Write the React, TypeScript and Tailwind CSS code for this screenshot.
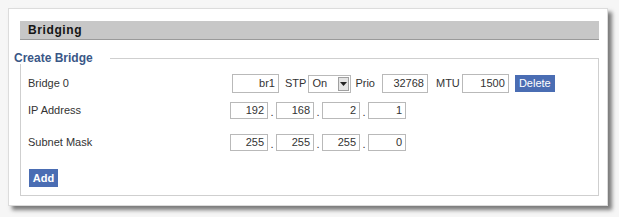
import React from "react";

const font = { fontFamily: '"Liberation Sans", Arial, sans-serif' };

function Field({ value, w, h = "h-[17px]" }: { value: string; w: string; h?: string }) {
  return (
    <div
      className={`${w} ${h} border border-[#b9b9b9] bg-white flex items-center justify-end pr-[3px] text-[11px] text-[#333] leading-none`}
    >
      {value}
    </div>
  );
}

function Ip({ parts }: { parts: string[] }) {
  return (
    <div className="flex items-center">
      {parts.map((p, i) => (
        <React.Fragment key={i}>
          {i > 0 && <span className="w-[8px] text-center text-[11px] text-[#333] self-end leading-[14px]">.</span>}
          <Field value={p} w="w-[38px]" h="h-[17px]" />
        </React.Fragment>
      ))}
    </div>
  );
}

export default function App() {
  return (
    <div className="w-[619px] h-[217px] bg-[#f6f6f6] pt-[8px] pl-[8px]" style={font}>
      <div className="w-[600px] h-[198px] bg-white border border-[#dcdcdc] shadow-[4px_4px_4px_rgba(0,0,0,0.5)] pt-[12px] pl-[11px]">
        <div className="w-[579px] h-[19px] bg-[#c7c7c7] border-b border-[#9a9a9a] flex items-center pl-[8px]">
          <span className="text-[12px] font-bold tracking-[0.6px] text-[#151515]">Bridging</span>
        </div>

        <div className="w-[579px] mt-[12px]">
          <div className="flex h-[12px]">
            <span className="-ml-[6px] bg-white text-[12px] leading-[12px] font-bold text-[#3a5787] pr-[17px]">
              Create Bridge
            </span>
            <div className="flex-1 self-end h-[6px] border-t border-r border-[#cfcfcf]" />
          </div>

          <div className="border-l border-r border-b border-[#cfcfcf] h-[132px] pl-[7px] pt-[10px] text-[11px] text-[#333]">
            <div className="flex items-center h-[19px]">
              <div className="w-[204px]">Bridge 0</div>
              <Field value="br1" w="w-[47px]" h="h-[19px]" />
              <span className="ml-[6px]">STP</span>
              <div className="ml-[2px] w-[43px] h-[18px] border border-[#b9b9b9] bg-white flex items-center">
                <span className="flex-1 pl-[3px]">On</span>
                <div className="w-[11px] h-[14px] mr-[1px] bg-[#e4e4e4] border border-[#a0a0a0] flex items-center justify-center">
                  <svg width="7" height="4" viewBox="0 0 7 4">
                    <path d="M0 0h7L3.5 4z" fill="#222" />
                  </svg>
                </div>
              </div>
              <span className="ml-[4px]">Prio</span>
              <div className="ml-[7px]">
                <Field value="32768" w="w-[46px]" h="h-[19px]" />
              </div>
              <span className="ml-[8px]">MTU</span>
              <div className="ml-[2px]">
                <Field value="1500" w="w-[47px]" h="h-[19px]" />
              </div>
              <button className="ml-[6px] h-[17px] w-[40px] bg-[#4a6db3] text-white text-[11px] leading-none">
                Delete
              </button>
            </div>

            <div className="flex items-center h-[17px] mt-[9px]">
              <div className="w-[202px]">IP Address</div>
              <Ip parts={["192", "168", "2", "1"]} />
            </div>

            <div className="flex items-center h-[17px] mt-[15px]">
              <div className="w-[202px]">Subnet Mask</div>
              <Ip parts={["255", "255", "255", "0"]} />
            </div>

            <button className="mt-[18px] ml-[1px] h-[18px] w-[29px] bg-[#4a6db3] text-white text-[11px] font-bold leading-none">
              Add
            </button>
          </div>
        </div>
      </div>
    </div>
  );
}
